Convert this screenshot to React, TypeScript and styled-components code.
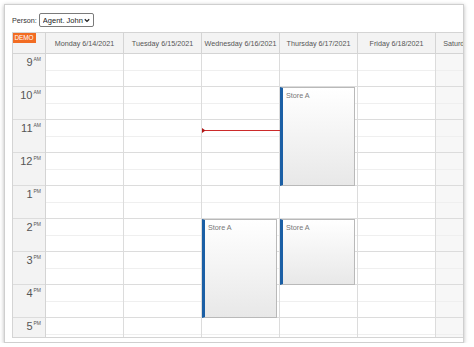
import React from "react";
import styled, { createGlobalStyle } from "styled-components";

const HOUR = 33;
const START = 9;

const GlobalStyle = createGlobalStyle`
  html, body {
    margin: 0;
    padding: 0;
    background: #fff;
  }
  body {
    font-family: "Liberation Sans", Arial, sans-serif;
  }
`;

const Frame = styled.div`
  margin: 4px 0 0 4px;
  width: 460px;
  height: 339px;
  box-sizing: border-box;
  border: 1px solid #cfcfcf;
  box-shadow: 0 1px 4px rgba(0, 0, 0, 0.28);
  padding: 0 0 4px 7px;
  overflow: hidden;
  display: flex;
  flex-direction: column;
  background: #fff;
`;

const Toolbar = styled.div`
  height: 27px;
  flex: none;
  display: flex;
  align-items: center;
  gap: 2px;
  padding-top: 3px;
  box-sizing: border-box;
  font-size: 7.2px;
  color: #333;
`;

const SelectWrap = styled.div`
  position: relative;
  width: 55px;
  height: 14px;
`;

const Select = styled.select`
  appearance: none;
  width: 100%;
  height: 100%;
  margin: 0;
  box-sizing: border-box;
  border: 1px solid #7a7a7a;
  border-radius: 2px;
  background: #fff;
  font: inherit;
  font-size: 7.5px;
  color: #222;
  padding: 0 0 0 3px;
  outline: none;
`;

const Chevron = styled.svg`
  position: absolute;
  right: 4px;
  top: 5px;
  pointer-events: none;
`;

const Calendar = styled.div`
  flex: 1;
  overflow: hidden;
  border-top: 1px solid #d4d4d4;
  border-left: 1px solid #d4d4d4;
  border-bottom: 1px solid #d4d4d4;
  display: grid;
  grid-template-columns: 33px repeat(6, 78px);
  grid-template-rows: 21px auto;
  font-size: 7.2px;
`;

const Corner = styled.div`
  position: relative;
  background: #f3f3f3;
  border-right: 1px solid #d4d4d4;
  border-bottom: 1px solid #d4d4d4;
  box-sizing: border-box;
`;

const Demo = styled.div`
  position: absolute;
  left: -1px;
  top: -2px;
  width: 24px;
  height: 12px;
  background: #f26c22;
  color: #fff;
  font-size: 6.4px;
  display: flex;
  align-items: center;
  justify-content: center;
`;

const DayHeader = styled.div`
  background: #f3f3f3;
  border-right: 1px solid #d4d4d4;
  border-bottom: 1px solid #d4d4d4;
  box-sizing: border-box;
  color: #555;
  display: flex;
  align-items: center;
  justify-content: center;
  white-space: nowrap;
  overflow: hidden;
`;

const RowHeader = styled.div`
  background: #f3f3f3;
  border-right: 1px solid #d4d4d4;
  display: flex;
  flex-direction: column;
`;

const HourCell = styled.div`
  height: ${HOUR}px;
  flex: none;
  box-sizing: border-box;
  border-bottom: 1px solid #dcdcdc;
  text-align: right;
  padding: 1px 4px 0 0;
  color: #555;
  font-size: 11px;
  line-height: 14px;
`;

const Suffix = styled.span`
  font-size: 5px;
  vertical-align: top;
  line-height: 8px;
  margin-left: 1px;
`;

const DayColumn = styled.div<{ $weekend?: boolean }>`
  position: relative;
  border-right: 1px solid #dcdcdc;
  background: ${(p) => (p.$weekend ? "#f7f7f7" : "#fff")};
  display: flex;
  flex-direction: column;
`;

const HalfCell = styled.div<{ $first: boolean }>`
  height: ${(p) => (p.$first ? 17 : 16)}px;
  flex: none;
  box-sizing: border-box;
  border-bottom: 1px solid ${(p) => (p.$first ? "#efefef" : "#dcdcdc")};
`;

const Event = styled.div<{ $top: number; $height: number }>`
  position: absolute;
  left: 0;
  right: 2px;
  top: ${(p) => p.$top}px;
  height: ${(p) => p.$height}px;
  box-sizing: border-box;
  border: 1px solid #b9b9b9;
  border-left: 3px solid #1b5fa5;
  background: linear-gradient(#ffffff, #e8e8e8);
  color: #777;
  font-size: 7.2px;
  padding: 3px 3px;
  z-index: 1;
`;

const Link = styled.div<{ $top: number }>`
  position: absolute;
  left: 0;
  top: ${(p) => p.$top}px;
  width: 78px;
  height: 1px;
  background: #cc2a2a;
  z-index: 2;
`;

const LinkHead = styled.svg`
  position: absolute;
  left: 0;
  top: -2px;
`;

type Ev = { day: number; start: number; end: number; text: string };

const days = [
  "Monday 6/14/2021",
  "Tuesday 6/15/2021",
  "Wednesday 6/16/2021",
  "Thursday 6/17/2021",
  "Friday 6/18/2021",
  "Saturday 6/19/2021",
];

const hours = [9, 10, 11, 12, 13, 14, 15, 16, 17];

const events: Ev[] = [
  { day: 3, start: 10, end: 13, text: "Store A" },
  { day: 2, start: 14, end: 17, text: "Store A" },
  { day: 3, start: 14, end: 16, text: "Store A" },
];

function hourLabel(h: number) {
  const n = h > 12 ? h - 12 : h;
  return { n, s: h < 12 ? "AM" : "PM" };
}

export default function App() {
  return (
    <>
      <GlobalStyle />
      <Frame>
        <Toolbar>
          <span>Person:</span>
          <SelectWrap>
            <Select defaultValue="john">
              <option value="john">Agent. John</option>
            </Select>
            <Chevron width="6" height="5" viewBox="0 0 6 5">
              <path d="M0.8 1.2 L3 3.4 L5.2 1.2" fill="none" stroke="#222" strokeWidth="1.3" />
            </Chevron>
          </SelectWrap>
        </Toolbar>
        <Calendar>
          <Corner>
            <Demo>DEMO</Demo>
          </Corner>
          {days.map((d) => (
            <DayHeader key={d}>{d}</DayHeader>
          ))}
          <RowHeader>
            {hours.map((h) => {
              const l = hourLabel(h);
              return (
                <HourCell key={h}>
                  {l.n}
                  <Suffix>{l.s}</Suffix>
                </HourCell>
              );
            })}
          </RowHeader>
          {days.map((d, i) => (
            <DayColumn key={d} $weekend={i === 5}>
              {hours.map((h) => (
                <React.Fragment key={h}>
                  <HalfCell $first />
                  <HalfCell $first={false} />
                </React.Fragment>
              ))}
              {events
                .filter((e) => e.day === i)
                .map((e, k) => (
                  <Event
                    key={k}
                    $top={(e.start - START) * HOUR}
                    $height={(e.end - e.start) * HOUR}
                  >
                    {e.text}
                  </Event>
                ))}
              {i === 2 && (
                <Link $top={76}>
                  <LinkHead width="4" height="5" viewBox="0 0 4 5">
                    <path d="M0 0 L3.5 2.5 L0 5 Z" fill="#b01818" />
                  </LinkHead>
                </Link>
              )}
            </DayColumn>
          ))}
        </Calendar>
      </Frame>
    </>
  );
}
